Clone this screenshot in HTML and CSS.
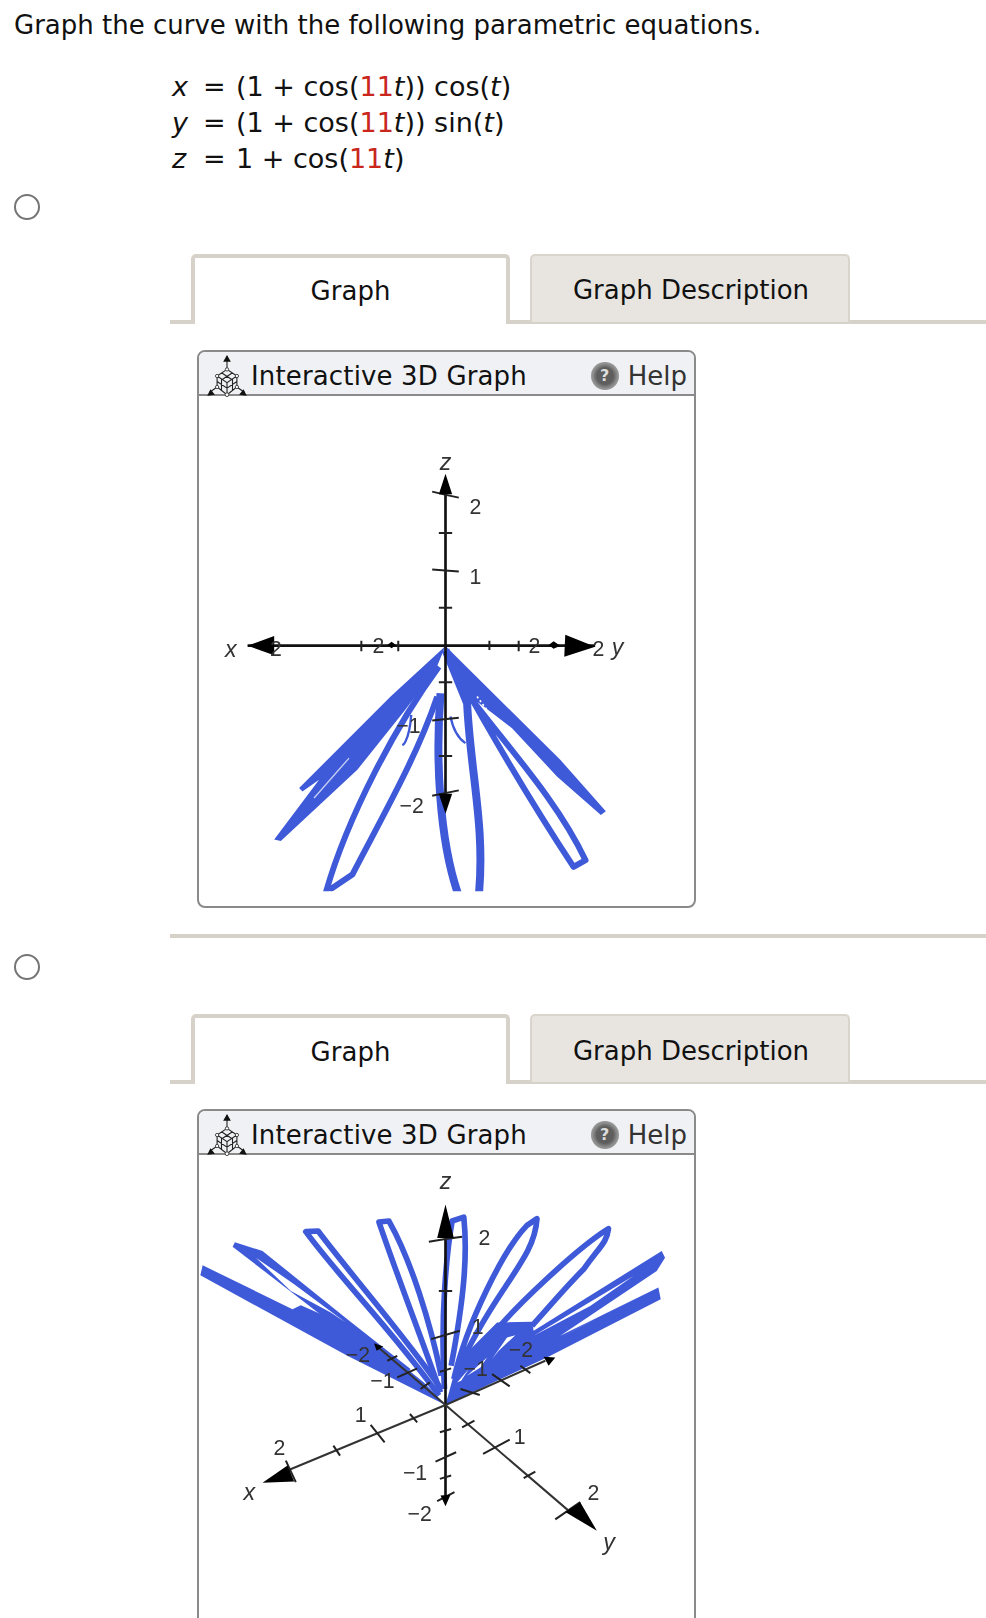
FILE: index.html
```html
<!DOCTYPE html>
<html lang="en">
<head>
<meta charset="utf-8">
<title>Parametric curve</title>
<link rel="stylesheet" href="styles.css">
</head>
<body>
<main class="page">
  <p class="prompt">Graph the curve with the following parametric equations.</p>
  <div class="eqs">
    <i class="v">x</i><span class="eq">=</span><span>(1 + cos(<b class="red">11</b><i>t</i>)) cos(<i>t</i>)</span>
    <i class="v">y</i><span class="eq">=</span><span>(1 + cos(<b class="red">11</b><i>t</i>)) sin(<i>t</i>)</span>
    <i class="v">z</i><span class="eq">=</span><span>1 + cos(<b class="red">11</b><i>t</i>)</span>
  </div>

  <section class="option first">
    <span class="radio"></span>
    <div class="panel">
      <div class="tabs">
        <div class="tab active">Graph</div>
        <div class="tab">Graph Description</div>
      </div>
      <div class="box">
        <div class="boxhead">
          <svg class="cube" viewBox="0 0 40 40"><use href="#cube-icon"/></svg>
          <span class="boxtitle">Interactive 3D Graph</span>
          <span class="help"><span class="helpdot">?</span>Help</span>
        </div>
        <svg class="plot" viewBox="198 396 496 510">
          <defs>
            <clipPath id="cut1"><rect x="0" y="-600" width="1560" height="1355"/></clipPath>
            <g id="cube-icon" fill="none" stroke="#222" stroke-width="1">
              <path d="M20 2v12M20 14l-9 6 9 6 9-6zM11 20v10l9 7 9-7V20M20 26v11M15 23v10M25 23v10M11 25l9 6 9-6M15 17l9 6M25 17l-9 6M11 30l-7 5M29 30l7 5"/>
              <path d="M20 1l-3.500 6h7zM2 38l3-6 4 5zM38 38l-3-6-4 5z" fill="#111" stroke="none"/>
              <g fill="#fff" stroke="#333" stroke-width=".8"><circle cx="20" cy="14" r="1.500"/><circle cx="11" cy="20" r="1.500"/><circle cx="29" cy="20" r="1.500"/><circle cx="11" cy="30" r="1.500"/><circle cx="29" cy="30" r="1.500"/><circle cx="20" cy="37" r="1.700"/></g>
            </g>
          </defs>
          <g transform="translate(190 640) scale(.33333)">
            <g clip-path="url(#cut1)">
              <path class="petal-fill" d="M765 18L600 170 325 445 335 455 385 420 250 600 270 604 350 530 500 390 640 215 735 90Z"/>
              <path class="hair" d="M370 475L475 355"/>
              <path class="petal" d="M745 80C620 250 470 530 405 760M740 170C680 350 570 540 485 705L415 752"/>
              <path class="petal thick" d="M750 160C735 350 745 600 805 770M765 30L830 190C840 400 885 560 865 770"/>
              <path class="petal thin" d="M780 230C790 280 810 300 825 310M640 312C630 320 655 315 662 225"/>
              <path class="petal-fill" d="M765 18L1110 360 1247 515 1232 526 1100 410 965 265 880 200 830 165 775 60Z"/>
              <path class="petal" d="M790 80C900 280 1030 500 1150 682L1186 662C1100 480 950 320 830 160"/>
              <path class="dots" d="M860 170L915 245"/>
            </g>
            <g class="axis">
              <path d="M765 -480V500M170 17H765M765 17H1215"/>
              <path class="tick" d="M725 -446Q765 -436 805 -428M745 -322H785M725 -212L805 -206M745 -97H785M745 127H785M725 242L805 234M745 349H785M725 468L805 452M512 2V34M623 2V34M985 2V34M897 2V30"/>
              <path class="head" d="M765 -500L745 -438H785ZM765 522L745 462H785ZM170 17L250 -12V46ZM1215 20L1125 -16 1122 50ZM590 15L603 5 616 15 603 25ZM1075 15L1090 4 1110 17 1090 26Z"/>
            </g>
            <g class="lbl">
              <text class="ital" x="765" y="-510">z</text>
              <text x="855" y="-380">2</text><text x="855" y="-168">1</text>
              <text class="ital" x="120" y="52">x</text>
              <text x="255" y="48">2</text><text x="563" y="40">2</text>
              <text x="1032" y="40">2</text><text x="1225" y="48">2</text>
              <text class="ital" x="1282" y="45">y</text>
              <text class="end" x="690" y="280">−1</text>
              <text class="end" x="700" y="520">−2</text>
            </g>
          </g>
        </svg>
      </div>
    </div>
  </section>

  <div class="rule"></div>

  <section class="option second">
    <span class="radio"></span>
    <div class="panel">
      <div class="tabs">
        <div class="tab active">Graph</div>
        <div class="tab">Graph Description</div>
      </div>
      <div class="box">
        <div class="boxhead">
          <svg class="cube" viewBox="0 0 40 40"><use href="#cube-icon"/></svg>
          <span class="boxtitle">Interactive 3D Graph</span>
          <span class="help"><span class="helpdot">?</span>Help</span>
        </div>
        <svg class="plot" viewBox="198 1156 496 510">
          <g transform="translate(190 1150) scale(.33333)">
            <path class="petal-fill" d="M765 768L470 620 28 378 35 348 305 480 330 468 470 530 600 620 700 700Z"/>
            <path class="petal-fill" d="M640 690L125 292 132 279 215 305 470 510 660 660Z"/>
            <path class="hole" d="M195 325L310 405 465 520 420 490 300 425Z"/>
            <path class="petal slim" d="M745 740C620 560 450 390 345 247L382 245C500 400 650 570 752 720"/>
            <path class="petal slim" d="M750 730C690 560 620 380 565 218L595 215C660 330 720 520 752 680"/>
            <path class="petal slim" d="M762 720C748 500 770 300 785 215L820 203C832 320 820 450 782 650"/>
            <path class="petal slim" d="M790 690C830 520 940 300 1010 228L1040 208C1035 280 1000 330 940 420 880 510 830 600 800 670"/>
            <path class="petal slim" d="M880 590C960 480 1170 290 1255 238 1250 280 1230 290 1180 360 1120 420 1080 470 1025 530"/>
            <path class="petal-fill" d="M765 768L800 640 920 520 1025 518 1030 545 1415 305 1425 325 1400 365 1110 560 1405 415 1412 450 1070 625Z"/>
            <path class="hole" d="M905 630L950 565 975 558 925 605ZM1030 560L1330 380 1200 470ZM1105 570L1370 420 1210 510ZM830 680L890 625 870 655ZM800 700L835 660 812 695Z"/>
            <g class="axis">
              <path d="M765 200V1050"/>
              <path class="fine" d="M765 768L290 965M765 768L1140 1090M765 768L560 592M765 768L1065 635"/>
              <path class="tick" d="M715 277Q765 268 815 262M745 425H785M722 570L808 545M748 668L782 658M748 850L782 840M735 938L797 910M748 990L782 980M740 1057L792 1030"/>
              <path class="tick" d="M658 795L680 820M540 828L582 880M428 890L448 920M285 935L315 1000M815 835L852 815M878 915L958 872M1000 988L1035 968M1095 1112L1170 1060"/>
              <path class="tick" d="M690 720L718 700M620 685L680 658M590 635L620 620M810 720L868 738M905 675L958 712M990 650L1020 672"/>
              <path class="head" d="M765 165L740 266H790ZM750 1040L780 1038 765 1072ZM215 1002L290 950 310 998ZM1220 1146L1125 1090 1170 1060ZM1060 623L1095 625 1075 650ZM550 582L578 592 558 605Z"/>
            </g>
            <g class="lbl">
              <text class="ital" x="765" y="118">z</text>
              <text x="882" y="287">2</text><text x="862" y="555">1</text>
              <text class="end" x="538" y="640">−2</text>
              <text class="end" x="612" y="718">−1</text>
              <text class="end" x="1028" y="625">−2</text>
              <text class="end" x="892" y="682">−1</text>
              <text x="510" y="820">1</text><text x="266" y="918">2</text>
              <text class="ital" x="175" y="1055">x</text>
              <text x="988" y="885">1</text><text x="1210" y="1055">2</text>
              <text class="ital" x="1257" y="1205">y</text>
              <text class="end" x="710" y="992">−1</text>
              <text class="end" x="724" y="1118">−2</text>
            </g>
          </g>
        </svg>
      </div>
    </div>
  </section>
</main>
</body>
</html>
```

FILE: styles.css
```css
html, body {
  margin: 0;
  height: 1618px;
  overflow: hidden;
  background: #fff;
}

.page {
  padding-left: 14px;
  font-family: "DejaVu Sans", Verdana, sans-serif;
  font-size: 26px;
  color: #111;
}

.prompt {
  margin: 0;
  padding-top: 10px;
  line-height: 30px;
}

.eqs {
  display: grid;
  grid-template-columns: 31px 33px auto;
  justify-content: start;
  margin: 29px 0 0 158px;
  font-size: 27px;
  line-height: 36px;
}

.eqs i, .eqs b { font-weight: normal; }
.eq { color: #111; }
.red { color: #c9261c; }

.option {
  display: block;
  position: relative;
}

.option.first { padding-top: 17px; }
.option.second { padding-top: 16px; }

.radio {
  display: block;
  box-sizing: border-box;
  width: 26px;
  height: 26px;
  border: 2px solid #757575;
  border-radius: 50%;
  background: #fff;
}

.panel {
  margin: 34px 0 0 156px;
}

.tabs {
  display: flex;
  height: 66px;
  padding-left: 21px;
  gap: 20px;
  border-bottom: 4px solid #d6d1c9;
}

.tab {
  box-sizing: border-box;
  width: 320px;
  height: 68px;
  padding: 16px 0 0 2px;
  text-align: center;
  line-height: 36px;
  background: #e8e5e0;
  border: 2px solid #d9d5cd;
  border-bottom: 0;
  border-radius: 5px 5px 0 0;
}

.second .tab { padding-top: 17px; }

.tab.active {
  width: 319px;
  height: 70px;
  padding: 15px 0 0;
  background: #fff;
  border: 4px solid #d6d1c9;
  border-bottom: 0;
  position: relative;
  z-index: 1;
}

.second .tab.active { padding-top: 16px; }

.box {
  box-sizing: border-box;
  width: 499px;
  height: 558px;
  margin: 26px 0 0 27px;
  border: 2px solid #8a8a8a;
  border-radius: 8px;
  overflow: hidden;
}

.second .box { margin-top: 25px; }

.boxhead {
  display: flex;
  align-items: center;
  height: 42px;
  background: #f0f1f4;
  border-bottom: 2px solid #8a8a8a;
  white-space: nowrap;
}

.cube {
  flex: none;
  width: 44px;
  height: 44px;
  margin: 6px 2px 0 6px;
}

.boxtitle {
  flex: 1;
  padding-top: 5px;
  letter-spacing: .15px;
}

.help {
  display: flex;
  align-items: center;
  padding: 5px 7px 0 0;
  color: #333;
}

.helpdot {
  display: inline-block;
  box-sizing: border-box;
  width: 28px;
  height: 28px;
  margin-right: 9px;
  border-radius: 50%;
  background: radial-gradient(circle, #5e5e5e 0 42%, #8f8f8f 62%, #b5b5b5 100%);
  color: #ddd;
  font: bold 16px/28px "DejaVu Sans", sans-serif;
  text-align: center;
}

.plot {
  display: block;
  width: 495px;
  height: 510px;
  filter: blur(.7px);
}

.petal-fill { fill: #3f5ad9; }
.petal { fill: none; stroke: #3f5ad9; stroke-width: 18; stroke-linejoin: round; }
.petal.thick { stroke-width: 24; }
.petal.slim { stroke-width: 17; }
.petal.thin { stroke-width: 7; }
.hole { fill: #fff; }
.hair { fill: none; stroke: #c9d1f4; stroke-width: 4; }
.dots { fill: none; stroke: #fff; stroke-width: 5; stroke-dasharray: 6 8; }

.axis path { fill: none; stroke: #111; stroke-width: 8; }
.axis .fine { stroke: #333; stroke-width: 6; }
.axis .tick { stroke: #222; stroke-width: 6; }
.axis .head { fill: #000; stroke: none; }

.lbl text {
  font-family: "Liberation Sans", Arial, sans-serif;
  font-size: 64px;
  fill: #333;
  text-anchor: middle;
}

.lbl .ital { font-style: italic; font-size: 70px; }
.lbl .end { text-anchor: end; }

.rule {
  height: 4px;
  margin: 26px 0 0 156px;
  background: #d6d1c9;
}
```
